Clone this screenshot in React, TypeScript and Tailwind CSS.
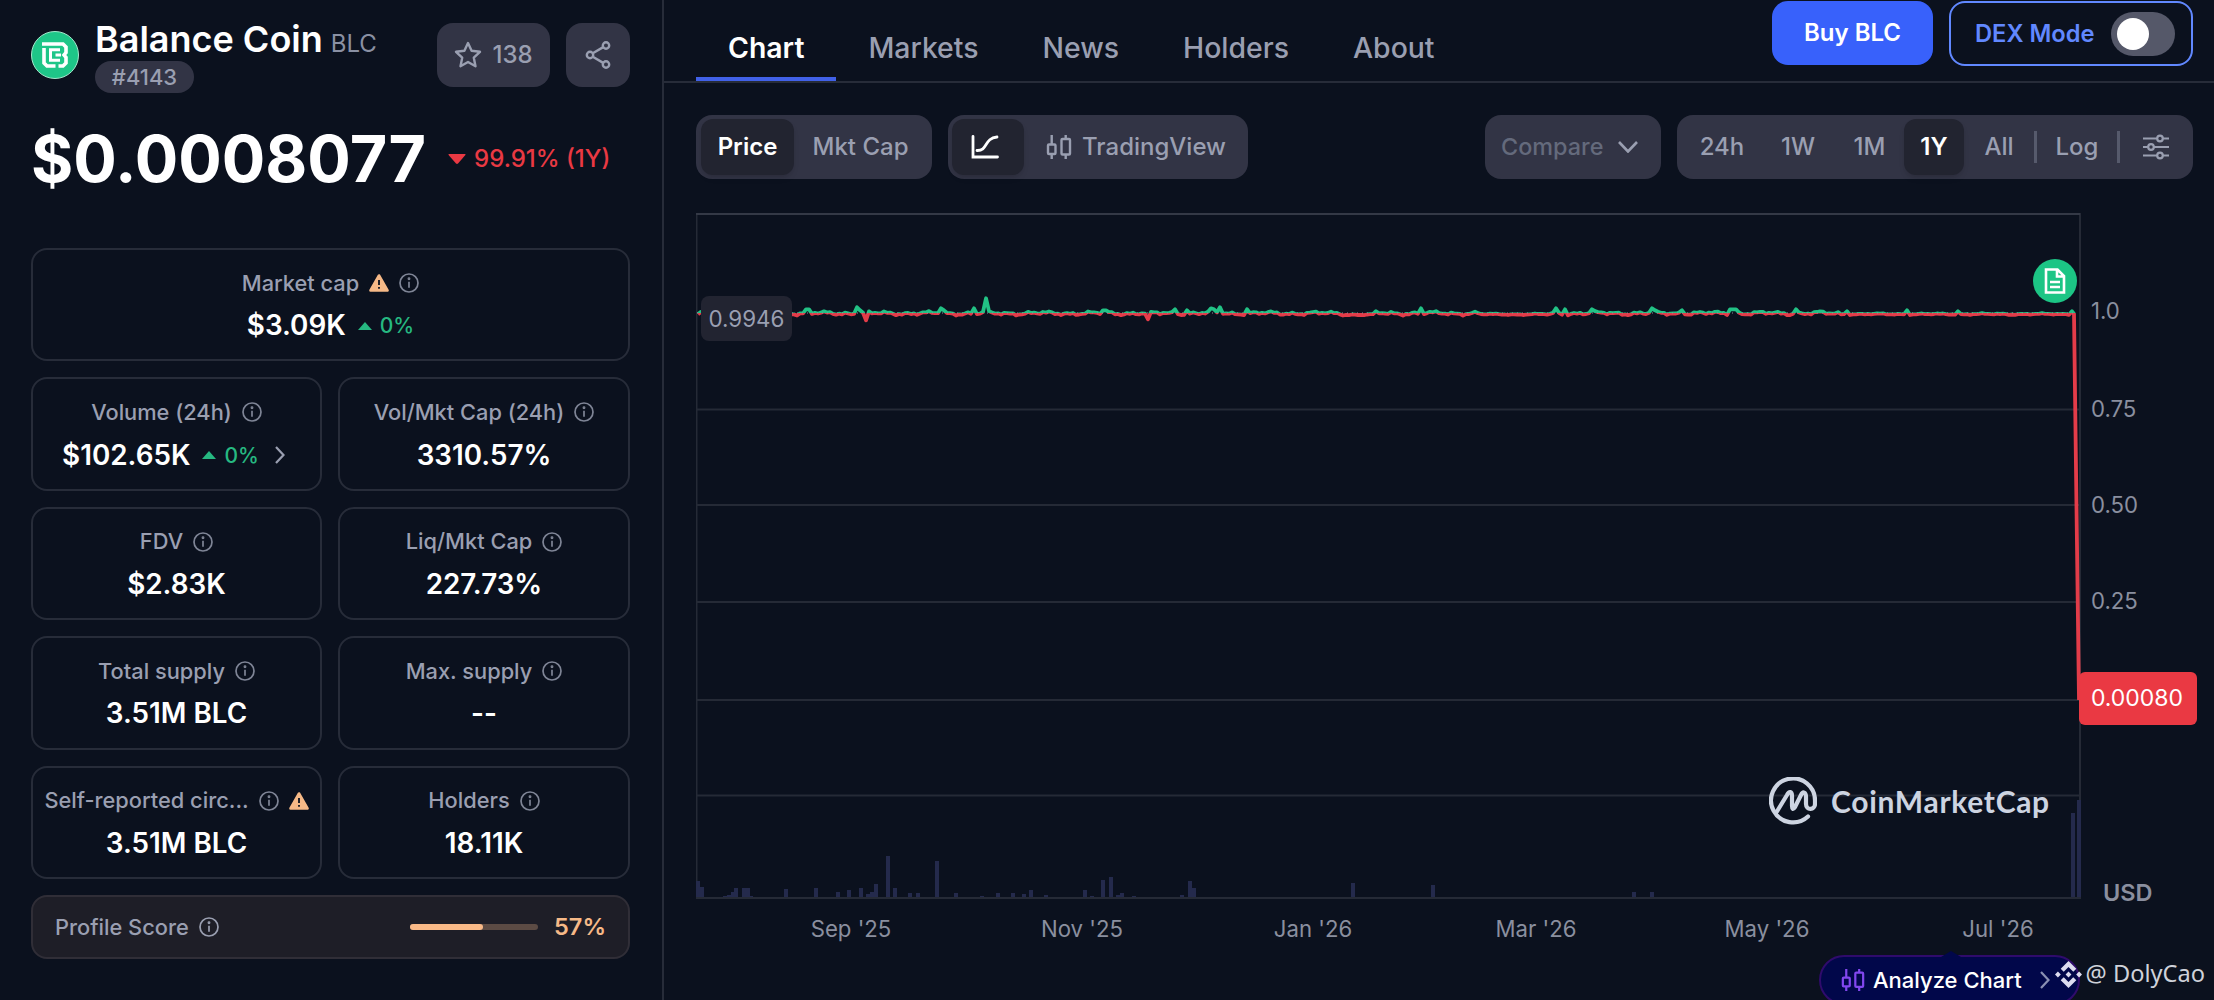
import type { ReactNode } from 'react'
import clsx from 'clsx'

const tabs = ['Chart', 'Markets', 'News', 'Holders', 'About']
const ranges = ['24h', '1W', '1M', '1Y', 'All']

// x, top of each volume bar
const volume = [
  [698, 881], [702, 887], [725, 896], [729, 895], [733, 892], [736, 888], [744, 888], [748, 888], [751, 896],
  [786, 889], [816, 888], [838, 892], [849, 890], [861, 888], [868, 894], [872, 892], [876, 884],
  [888, 856], [895, 888], [910, 893], [918, 893], [937, 861], [956, 893], [982, 896], [998, 893], [1013, 893],
  [1024, 894], [1031, 890], [1046, 895], [1085, 890], [1092, 896], [1103, 880], [1111, 877], [1118, 895],
  [1122, 893], [1134, 896], [1182, 895], [1190, 881], [1194, 888], [1353, 883], [1433, 885],
  [1634, 892], [1652, 892], [2073, 813], [2079, 800],
]

// peaks and dips of the price away from the peg
const moves: Record<number, number> = {
  806: -4, 809: -4, 857: -6, 860: -3, 866: 7, 941: -5, 944: -3, 974: -5, 986: -15, 1103: -3, 1106: -3,
  1148: 6, 1175: -4, 1187: -3, 1211: -5, 1214: -4, 1220: -6, 1247: -4, 1421: -5, 1556: -5, 1565: -4, 1592: -4,
  1652: -5, 1655: -3, 1682: -3, 1730: -4, 1733: -4, 1736: -4, 1796: -4, 1820: -2, 1847: -2, 1907: -3, 1958: -2, 2072: -2,
}

const pricePath = (() => {
  const pts: string[] = []
  for (let x = 698; x <= 2072; x += 3) {
    const base = x > 1340 && x < 1376 ? 1.4 : x > 1480 && x < 1552 ? 1 : x > 1840 ? 0.8 : 0
    const wave = Math.sin(x * 0.31) * 0.9 + Math.sin(x * 0.113) * 0.8 + Math.sin(x * 0.83) * 0.7
    const dy = moves[x + 1] ?? moves[x] ?? moves[x - 1] ?? base + wave * (base ? 0.4 : 1)
    pts.push(`${x} ${(313.3 + dy).toFixed(1)}`)
  }
  return `M${pts.join('L')}L2074 314L2079 700`
})()

function Info({ className }: { className?: string }) {
  return (
    <svg viewBox="0 0 20 20" className={clsx('size-5 shrink-0 text-[#7f8596]', className)} fill="none" stroke="currentColor" strokeWidth="1.7">
      <circle cx="10" cy="10" r="9" />
      <path d="M10 8.800v6" />
      <circle cx="10" cy="5.800" r="0.6" fill="currentColor" />
    </svg>
  )
}

function Warning() {
  return (
    <svg viewBox="0 0 20 18" className="h-[18px] w-5 shrink-0">
      <path d="M10 1.5 18.5 16.5H1.5Z" fill="#f6b987" stroke="#f6b987" strokeWidth="2.6" strokeLinejoin="round" />
      <path d="M10 6v5M10 13v1.8" stroke="#0c121f" strokeWidth="1.8" />
    </svg>
  )
}

function Up() {
  return (
    <span className="flex items-center gap-2 text-[21px] font-medium text-[#26b881]">
      <svg viewBox="0 0 14 8" className="h-2 w-3.5" fill="currentColor">
        <path d="M7 0 14 8H0Z" />
      </svg>
      0%
    </span>
  )
}

function Candles({ className }: { className?: string }) {
  return (
    <svg viewBox="0 0 26 26" className={className} fill="none" stroke="currentColor" strokeWidth="2.4">
      <rect x="2" y="10.5" width="7.5" height="9.5" rx="1" />
      <path d="M5.7 1v9.500M5.7 20v5" />
      <rect x="15.500" y="5" width="8.500" height="15.500" rx="1" />
      <path d="M19.700 1v4M19.700 20.500v4.500" />
    </svg>
  )
}

function Chevron({ className }: { className?: string }) {
  return (
    <svg viewBox="0 0 10 18" className={className} fill="none" stroke="currentColor" strokeWidth="2.2">
      <path d="m1 1 7.500 8L1 17" />
    </svg>
  )
}

function Stat({ label, value, icons, extra, wide }: { label: string; value: string; icons?: ReactNode; extra?: ReactNode; wide?: boolean }) {
  return (
    <div className={clsx('flex h-[113.4px] flex-col items-center rounded-2xl border-2 border-[#272c39] pt-[19px]', wide && 'col-span-2')}>
      <div className="flex h-7 items-center gap-2.5 whitespace-nowrap text-[21.8px] font-medium text-[#9a9fb1]">
        {label}
        {icons ?? <Info />}
      </div>
      <div className="mt-[13px] flex h-8 items-center gap-3 whitespace-nowrap text-[27.8px] font-semibold text-white">
        {value}
        {extra}
      </div>
    </div>
  )
}

function Sidebar() {
  return (
    <aside className="w-[664px] shrink-0 border-r-2 border-[#272c39] pl-[31px] pr-8 pt-[21px]">
      <div className="flex h-[72px] items-start">
        <svg viewBox="0 0 48 48" className="mt-[10px] size-12 shrink-0">
          <circle cx="24" cy="24" r="23.500" fill="#1ec688" stroke="#a5e8cd" />
          <g fill="none" stroke="#fff" strokeWidth="3.600">
            <path d="M11 13H32L35 16V21.500L33 24L35 26.500V32L32 35H27.500" />
            <path d="M13 17V32L16 35H24.500" />
            <path d="M29 18.800H19.500V29.200H29M24.500 24H30" strokeWidth="3" />
          </g>
        </svg>
        <div className="ml-4">
          <div className="flex h-9 items-baseline gap-2 whitespace-nowrap leading-9">
            <h1 className="text-[36px] font-semibold leading-9 text-white">Balance Coin</h1>
            <span className="text-2xl leading-9 text-[#8a90a3]">BLC</span>
          </div>
          <span className="mt-1 flex h-8 w-[99px] items-center justify-center rounded-full bg-[#323445] text-[22px] font-medium text-[#9a9fb1]">#4143</span>
        </div>
        <button className="ml-auto mt-0.5 flex h-16 w-[113px] items-center justify-center gap-2.5 rounded-2xl bg-[#323445] text-2xl font-medium text-[#9a9fb1]">
          <svg viewBox="0 0 28 28" className="size-7" fill="none" stroke="currentColor" strokeWidth="2.4" strokeLinejoin="round">
            <path d="m14 2 3.600 7.800 8.400 1-6.200 5.900 1.700 8.500L14 21l-7.500 4.200 1.700-8.500L2 10.800l8.400-1Z" />
          </svg>
          138
        </button>
        <button className="ml-4 mt-0.5 flex size-16 items-center justify-center rounded-2xl bg-[#323445] text-[#9a9fb1]">
          <svg viewBox="0 0 26 28" className="h-7 w-[26px]" fill="none" stroke="currentColor" strokeWidth="2.4">
            <circle cx="5" cy="14" r="3.200" />
            <circle cx="21" cy="4.500" r="3.200" />
            <circle cx="21" cy="23.500" r="3.200" />
            <path d="m7.800 12.300 10.400-6.200M7.800 15.700l10.400 6.200" />
          </svg>
        </button>
      </div>

      <div className="mt-[26px] flex h-20 items-center whitespace-nowrap">
        <span className="text-[64.6px] font-bold text-white">$0.0008077</span>
        <span className="ml-[22px] flex items-center gap-2 text-2xl font-medium text-[#ea3943]">
          <svg viewBox="0 0 18 10" className="h-2.5 w-[18px]" fill="currentColor">
            <path d="M1 0h16q1 0 .4 1L10 9.500q-1 .8-2 0L.6 1Q0 0 1 0Z" />
          </svg>
          99.91% (1Y)
        </span>
      </div>

      <div className="mt-[49px] grid grid-cols-[291px_1fr] gap-4">
        <Stat wide label="Market cap" value="$3.09K" extra={<Up />} icons={<><Warning /><Info /></>} />
        <Stat
          label="Volume (24h)"
          value="$102.65K"
          extra={<><Up /><Chevron className="ml-1 mr-1.5 h-[18px] w-2.5 text-[#9a9fb1]" /></>}
        />
        <Stat label="Vol/Mkt Cap (24h)" value="3310.57%" />
        <Stat label="FDV" value="$2.83K" />
        <Stat label="Liq/Mkt Cap" value="227.73%" />
        <Stat label="Total supply" value="3.51M BLC" />
        <Stat label="Max. supply" value="--" />
        <Stat label="Self-reported circ..." value="3.51M BLC" icons={<><Info /><Warning /></>} />
        <Stat label="Holders" value="18.11K" />
        <div className="col-span-2 flex h-16 items-center rounded-2xl border-2 border-[#302e37] bg-[#1e1e27] px-[22px] text-[21.8px] font-medium text-[#9a9fb1]">
          Profile Score
          <Info className="ml-2.5 text-[#9a9fb1]" />
          <div className="ml-auto mr-4 h-1.5 w-32 rounded-full bg-[#5c4b44]">
            <div className="h-full w-[57%] rounded-full bg-[#f9b987]" />
          </div>
          <span className="text-[23.500px] font-semibold text-[#f6b987]">57%</span>
        </div>
      </div>
    </aside>
  )
}

function Toolbar() {
  return (
    <div className="flex h-16 text-2xl font-medium text-[#9a9fb1]">
      <div className="flex w-[236px] items-center rounded-2xl bg-[#323445] p-[5px]">
        <button className="h-14 w-[93px] rounded-xl bg-[#222430] font-semibold text-white shadow-md">Price</button>
        <button className="flex-1">Mkt Cap</button>
      </div>
      <div className="ml-4 flex w-[300px] items-center rounded-2xl bg-[#323445] p-1">
        <button className="flex h-14 w-[72px] items-center justify-center rounded-xl bg-[#222430] pr-1.5 text-white shadow-md">
          <svg viewBox="0 0 28 24" className="h-6 w-7" fill="none" stroke="currentColor" strokeWidth="2.800" strokeLinecap="round">
            <path d="M2 1.500V22H26.500M6 15.500C17 16 13 3 26 2" />
          </svg>
        </button>
        <button className="flex flex-1 items-center justify-center gap-2.5 pl-1">
          <Candles className="size-[26px]" />
          TradingView
        </button>
      </div>
      <button className="ml-auto flex w-[176px] items-center rounded-2xl bg-[#323445] pl-4 text-[23.400px] text-[#646a7c]">
        Compare
        <svg viewBox="0 0 20 12" className="ml-[15px] h-3 w-5 text-[#9a9fb1]" fill="none" stroke="currentColor" strokeWidth="2.600">
          <path d="m1 1 9 9.500L19 1" />
        </svg>
      </button>
      <div className="ml-4 flex w-[516px] items-center rounded-2xl bg-[#323445] pl-1.5">
        {ranges.map((r) => (
          <button
            key={r}
            className={clsx('h-14 shrink-0', r === '1Y' ? 'w-[60px] rounded-xl bg-[#222430] font-semibold text-white shadow-md' : r === '24h' ? 'w-[78px]' : r === '1W' ? 'w-[74px]' : r === '1M' ? 'w-[69px]' : 'w-[70px]')}
          >
            {r}
          </button>
        ))}
        <span className="h-8 w-[3px] bg-[#565a6c]" />
        <button className="w-20">Log</button>
        <span className="h-8 w-[3px] bg-[#565a6c]" />
        <svg viewBox="0 0 26 26" className="ml-[23px] size-[26px]" fill="none" stroke="currentColor" strokeWidth="2.200">
          <path d="M0 4.500h14M20 4.500h6M0 13h5M11 13h15M0 21.500h14M20 21.500h6" />
          <circle cx="17" cy="4.500" r="2.800" />
          <circle cx="8" cy="13" r="2.800" />
          <circle cx="17" cy="21.500" r="2.800" />
        </svg>
      </div>
    </div>
  )
}

function PriceChart() {
  return (
    <div className="relative mt-[34px] h-[742px]">
      <svg viewBox="696 213 1518 742" className="h-[742px] w-[1518px]" fontSize="22.200" fill="#8a8f9f">
        <defs>
          <clipPath id="above">
            <rect x="696" y="213" width="1384" height="100" />
          </clipPath>
          <clipPath id="below">
            <rect x="696" y="313" width="1390" height="400" />
          </clipPath>
        </defs>
        <g stroke="#252a36" strokeWidth="2">
          <path d="M696 409.500H2080M696 505H2080M696 602H2080M696 700H2080M696 795.500H2080M696 898H2081" />
          <path d="M696.500 213V898M2080 213V898" />
          <path d="M696 214H2080" stroke="#343946" />
        </g>
        {volume.map(([x, top]) => (
          <rect key={x} x={x - 2} y={top} width="4" height={897 - top} fill="#242a4c" />
        ))}
        <g fill="none" strokeWidth="3.800" strokeLinejoin="round">
          <path d={pricePath} stroke="#22c285" clipPath="url(#above)" />
          <path d={pricePath} stroke="#e33c49" clipPath="url(#below)" />
        </g>
        <path d="M697 313H2074" stroke="#8a8f9f" strokeWidth="1" strokeDasharray="1 4" />
        <text x="2091" y="319">1.0</text>
        <text x="2091" y="417">0.75</text>
        <text x="2091" y="513">0.50</text>
        <text x="2091" y="609">0.25</text>
        <text x="2103" y="901" fontSize="23.500" fontWeight="600">USD</text>
        <g textAnchor="middle">
          <text x="851" y="937">Sep '25</text>
          <text x="1082" y="937">Nov '25</text>
          <text x="1313" y="937">Jan '26</text>
          <text x="1536" y="937">Mar '26</text>
          <text x="1767" y="937">May '26</text>
          <text x="1998" y="937">Jul '26</text>
        </g>
      </svg>

      <span className="absolute left-[5px] top-[83px] flex h-[45px] w-[91px] items-center justify-center rounded-lg bg-[#222431] text-[22.400px] text-[#9a9fb1]">0.9946</span>
      <span className="absolute left-[1383px] top-[459px] flex h-[53px] w-[118px] items-center justify-center rounded-md bg-[#ea3943] pr-0.5 text-[23px] text-white">0.00080</span>

      <span className="absolute left-[1337px] top-[46px] flex size-11 items-center justify-center rounded-full bg-[#1cc585]">
        <svg viewBox="0 0 22 26" className="h-[26px] w-[22px]" fill="none" stroke="#fff" strokeWidth="2.600">
          <path d="M2 1.500H13.500L20 8V24.500H2ZM13 2V8.500H20M6 14H16M6 19H16" />
        </svg>
      </span>

      <div className="absolute left-[1073px] top-[564px] flex h-12 items-center text-[#cdd4e1]">
        <svg viewBox="0 0 48 48" className="size-12" fill="none" stroke="currentColor" strokeWidth="4.200" strokeLinecap="round" strokeLinejoin="round">
          <path d="M39 39.500A22 22 0 1 1 46 24V27C46 33 37 34 37 27V20C37 15 34 14 32 18L26 30C24 33 23 32 23 29V19C23 14 20 14 18 18L7 36" />
        </svg>
        <span className="ml-[14px] font-[Lato,sans-serif] text-[30px] font-bold tracking-[0.7px]">CoinMarketCap</span>
      </div>
    </div>
  )
}

export default function App() {
  return (
    <div className="relative flex h-[1000px] w-[2214px] overflow-hidden bg-[#0b111e] font-[Inter,sans-serif]">
      <Sidebar />
      <main className="flex min-w-0 flex-1 flex-col">
        <div className="flex h-[83px] shrink-0 items-start border-b-2 border-[#272c39] pl-8 pr-[21px]">
          <nav className="flex h-[81px]">
            {tabs.map((tab, i) => (
              <a
                key={tab}
                className={clsx('flex items-center border-b-4 px-8 pt-[19px] text-[28.400px]', i === 0 ? 'border-[#4161e8] font-semibold text-white' : 'border-transparent font-medium text-[#9a9fb1]')}
              >
                {tab}
              </a>
            ))}
          </nav>
          <button className="ml-auto mt-px h-16 w-[161px] rounded-2xl bg-[#3861fb] text-2xl font-semibold text-white">Buy BLC</button>
          <button className="ml-4 mt-px flex h-[65px] w-[244px] items-center rounded-2xl border-2 border-[#6188ff] pl-6 text-[23.700px] font-semibold text-[#6188ff]">
            DEX Mode
            <span className="ml-auto mr-4 flex h-11 w-16 items-center rounded-full bg-[#555869] pl-1.5">
              <span className="size-8 rounded-full bg-white" />
            </span>
          </button>
        </div>
        <div className="pl-8 pr-[21px] pt-8">
          <Toolbar />
        </div>
        <div className="pl-8">
          <PriceChart />
          <button className="relative ml-[1123px] flex h-[50px] w-[261px] items-center rounded-full border-2 border-[#2f0b6c] bg-[#01074a] pl-5 text-[22px] font-medium text-white">
            <svg viewBox="0 0 20 6" className="absolute -top-1.5 left-[120px] h-1.5 w-5" fill="#01074a">
              <path d="M10 0 20 6H0Z" />
            </svg>
            <Candles className="size-6 text-[#8247ef]" />
            <span className="ml-2">Analyze Chart</span>
            <Chevron className="ml-[18px] h-[18px] w-2.5 text-[#8a90b3]" />
          </button>
        </div>
      </main>

      <div className="absolute right-[9px] top-[956px] flex h-9 items-center font-['Noto_Sans',sans-serif] text-[23.600px] text-[#cfd2da]">
        <svg viewBox="0 0 26 26" className="mr-1 size-[27px]" fill="#dcdcf0">
          <path d="M13 0 20.500 7.500 17.600 10.400 13 5.800 8.400 10.400 5.500 7.500ZM13 26 5.500 18.500 8.400 15.600 13 20.200 17.600 15.600 20.500 18.500ZM13 10.200 15.800 13 13 15.800 10.200 13ZM2.800 10.200 5.600 13 2.800 15.800 0 13ZM23.200 10.200 26 13 23.200 15.800 20.400 13Z" />
        </svg>
        @ DolyCao
      </div>
    </div>
  )
}
